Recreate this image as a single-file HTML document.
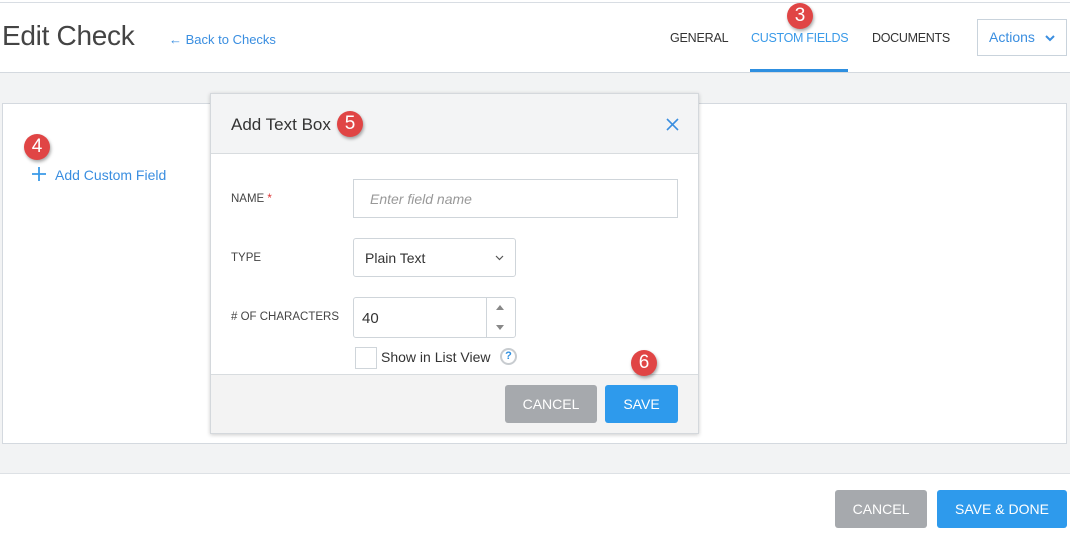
<!DOCTYPE html>
<html><head><style>
*{box-sizing:border-box;margin:0;padding:0}
body{width:1070px;height:543px;overflow:hidden;background:#fff;font-family:"Liberation Sans",sans-serif;position:relative}
.abs{position:absolute}
.badge{position:absolute;width:26px;height:26px;border-radius:50%;background:#e04545;color:#fff;font-size:19px;text-align:center;line-height:26px;box-shadow:1px 2px 3px rgba(0,0,0,.35)}
.btn{position:absolute;color:#fff;font-size:14px;text-align:center;border-radius:3px}
</style></head><body>
<div class="abs" style="left:0;top:2px;width:1070px;height:1px;background:#d8dde3"></div>
<div class="abs" style="left:0;top:72px;width:1070px;height:401px;background:#f2f3f4;border-top:1px solid #d4d9df"></div>
<div class="abs" style="left:2px;top:20px;font-size:28px;color:#444;letter-spacing:-0.3px">Edit Check</div>
<div class="abs" style="left:169px;top:32px;font-size:13px;color:#3a8ee0">&#x2190; Back to Checks</div>
<div class="abs" style="left:670px;top:31px;font-size:12.5px;color:#333;letter-spacing:-0.2px">GENERAL</div>
<div class="abs" style="left:751px;top:31px;font-size:12.5px;color:#3a9ae8;letter-spacing:-0.3px">CUSTOM FIELDS</div>
<div class="abs" style="left:750px;top:69px;width:98px;height:3px;background:#2e8fe0"></div>
<div class="abs" style="left:872px;top:31px;font-size:12.5px;color:#333;letter-spacing:-0.3px">DOCUMENTS</div>
<div class="abs" style="left:977px;top:19px;width:90px;height:37px;border:1px solid #c9d3dc;color:#3a8ee0;font-size:14px;padding:9px 0 0 11px">Actions <svg width="10" height="8" style="margin-left:6px" viewBox="0 0 10 8"><path d="M1 2l4 4 4-4" stroke="#3a8ee0" stroke-width="2" fill="none"/></svg></div>
<div class="badge" style="left:787px;top:3px">3</div>
<div class="abs" style="left:2px;top:103px;width:1065px;height:341px;background:#fff;border:1px solid #d4d9df"></div>
<div class="badge" style="left:24px;top:134px">4</div>
<svg class="abs" style="left:32px;top:167px" width="14" height="14" viewBox="0 0 14 14"><path d="M7 0v14M0 7h14" stroke="#3a9ae8" stroke-width="1.8"/></svg>
<div class="abs" style="left:55px;top:167px;font-size:14px;color:#3a8ee0">Add Custom Field</div>
<div class="abs" style="left:0;top:473px;width:1070px;height:1px;background:#dde1e5"></div>
<div class="btn" style="left:835px;top:490px;width:92px;height:38px;background:#a6a9ad;line-height:38px">CANCEL</div>
<div class="btn" style="left:937px;top:490px;width:130px;height:38px;background:#2e9aec;line-height:38px">SAVE &amp; DONE</div>
<div class="abs" style="left:210px;top:93px;width:489px;height:341px;background:#fff;border:1px solid #d4d8dc;box-shadow:0 1px 4px rgba(0,0,0,.2)">
 <div class="abs" style="left:0;top:0;width:487px;height:60px;background:#f3f4f5;border-bottom:1px solid #d8dcdf"></div>
 <div class="abs" style="left:20px;top:21px;font-size:17px;color:#333">Add Text Box</div>
 <div class="abs" style="left:455px;top:24px"><svg width="13" height="13" viewBox="0 0 13 13"><path d="M1 1l11 11M12 1L1 12" stroke="#3a8ee0" stroke-width="1.6"/></svg></div>
 <div class="abs" style="left:20px;top:99px;font-size:11.5px;color:#444">NAME <span style="color:#d33">*</span></div>
 <div class="abs" style="left:142px;top:85px;width:325px;height:39px;border:1px solid #cfd5da;font-size:14px;color:#999;font-style:italic;padding:11px 16px">Enter field name</div>
 <div class="abs" style="left:20px;top:158px;font-size:11.5px;color:#444">TYPE</div>
 <div class="abs" style="left:142px;top:144px;width:163px;height:39px;border:1px solid #cfd5da;border-radius:3px;font-size:14px;color:#333;padding:11px 11px">Plain Text<svg style="position:absolute;right:11px;top:16px" width="9" height="6" viewBox="0 0 9 6"><path d="M1 1l3.5 3.5L8 1" stroke="#555" stroke-width="1.2" fill="none"/></svg></div>
 <div class="abs" style="left:20px;top:217px;font-size:11.5px;color:#444"># OF CHARACTERS</div>
 <div class="abs" style="left:142px;top:203px;width:163px;height:41px;border:1px solid #cfd5da;border-radius:3px;font-size:15px;color:#333;padding:12px 8px">40
  <div class="abs" style="left:132px;top:0;width:1px;height:39px;background:#cfd5da"></div>
  <div class="abs" style="left:142px;top:7px;width:0;height:0;border:4px solid transparent;border-bottom:5px solid #888;border-top:0"></div>
  <div class="abs" style="left:142px;top:27px;width:0;height:0;border:4px solid transparent;border-top:5px solid #888;border-bottom:0"></div>
 </div>
 <div class="abs" style="left:144px;top:253px;width:22px;height:22px;border:1px solid #cfd5da"></div>
 <div class="abs" style="left:170px;top:255px;font-size:14px;color:#333">Show in List View</div>
 <div class="abs" style="left:289px;top:254px;width:17px;height:17px;border-radius:50%;border:2px solid #c8ccd0;color:#2e8fe0;font-size:11px;font-weight:bold;text-align:center;line-height:13px">?</div>
 <div class="abs" style="left:0;top:280px;width:487px;height:59px;background:#f3f3f3;border-top:1px solid #d8dcdf"></div>
 <div class="btn" style="left:294px;top:291px;width:92px;height:38px;background:#a6a9ad;line-height:38px">CANCEL</div>
 <div class="btn" style="left:394px;top:291px;width:73px;height:38px;background:#2e9aec;line-height:38px">SAVE</div>
</div>
<div class="badge" style="left:337px;top:111px">5</div>
<div class="badge" style="left:631px;top:350px">6</div>
</body></html>
